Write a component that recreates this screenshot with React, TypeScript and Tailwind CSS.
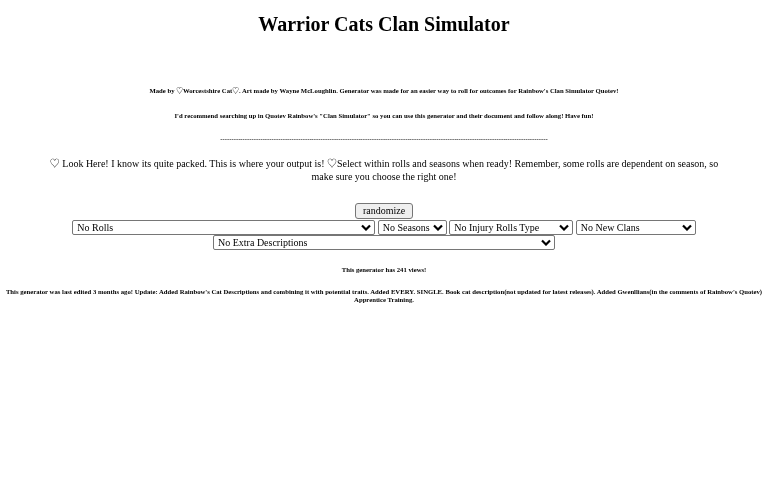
import React from 'react';

const selects = [
  { label: 'No Rolls', width: 'w-[303px]' },
  { label: 'No Seasons', width: 'w-[69px]' },
  { label: 'No Injury Rolls Type', width: 'w-[124px]' },
  { label: 'No New Clans', width: 'w-[120px]' },
  { label: 'No Extra Descriptions', width: 'w-[342px]' },
];

const App: React.FC = () => {
  return (
    <div className="min-h-[480px] bg-white px-[5px] text-center font-['Liberation_Serif','Noto_Sans_CJK_JP',serif] text-black [will-change:transform]">
      <h1 className="pt-[12px] text-[20px] leading-[24px] font-bold">Warrior Cats Clan Simulator</h1>

      <h6 className="mt-[51px] text-[6.7px] leading-[8px] font-bold">
        Made by ♡Worcestshire Cat♡. Art made by Wayne McLoughlin. Generator was made for an easier way to roll for outcomes for Rainbow's Clan Simulator Quotev!
      </h6>
      <h6 className="mt-[17px] text-[6.7px] leading-[8px] font-bold">
        I'd recommend searching up in Quotev Rainbow's "Clan Simulator" so you can use this generator and their document and follow along! Have fun!
      </h6>
      <h6 className="mt-[15px] text-[6.7px] leading-[8px] font-bold">
        ---------------------------------------------------------------------------------------------------------------------------------------------------
      </h6>

      <p className="mx-auto mt-[14px] w-[680px] text-[10px] leading-[13px]">
        ♡ Look Here! I know its quite packed. This is where your output is! ♡Select within rolls and seasons when ready! Remember, some rolls are dependent on season, so make sure you choose the right one!
      </p>

      <div className="mt-[20px] leading-[0]">
        <button className="h-[16px] w-[58px] rounded-[3px] border border-[#767676] bg-[#efefef] text-[10px] leading-[12px]">
          randomize
        </button>
      </div>

      <div className="mt-[1px] flex flex-wrap justify-center gap-x-[2.5px]">
        {selects.map((s) => (
          <div key={s.label} className={`${s.width} relative h-[15px]`}>
            <select className="block h-full w-full appearance-none rounded-[2px] border border-[#767676] bg-white pl-[4px] text-[10px] leading-[12px]">
              <option>{s.label}</option>
            </select>
            {/* chevron */}
            <svg
              viewBox="0 0 10 7"
              className="pointer-events-none absolute top-[4px] right-[4px] h-[7px] w-[10px]"
              fill="none"
              stroke="#000"
              strokeWidth="2.2"
            >
              <path d="M1 1.5 L5 5.5 L9 1.5" />
            </svg>
          </div>
        ))}
      </div>

      <h6 className="mt-[16px] text-[6.7px] leading-[8px] font-bold">This generator has 241 views!</h6>
      <h6 className="mt-[14px] text-[6.7px] leading-[8px] font-bold">
        This generator was last edited 3 months ago! Update: Added Rainbow's Cat Descriptions and combining it with potential traits. Added EVERY. SINGLE. Book cat description(not updated for latest releases). Added Gwenllians(in the comments of Rainbow's Quotev) Apprentice Training.
      </h6>
    </div>
  );
};

export default App;
